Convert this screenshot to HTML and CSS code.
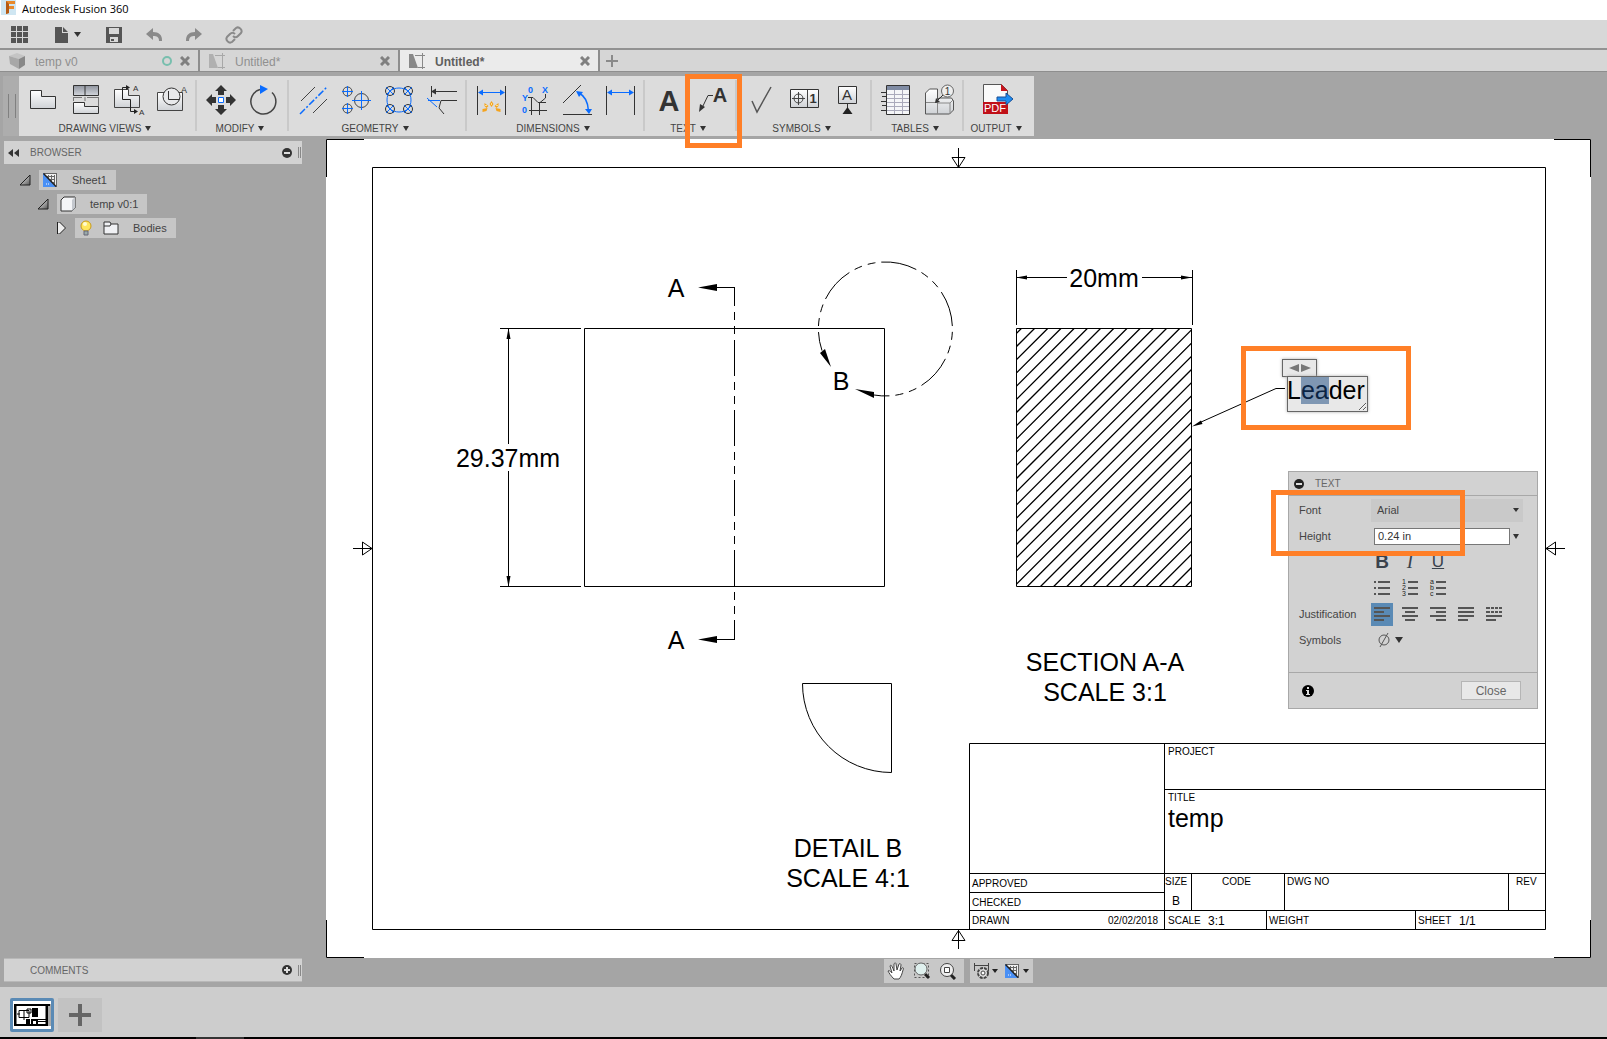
FILE: index.html
```html
<!DOCTYPE html>
<html lang="en">
<head>
    <meta charset="UTF-8">
    <title>Autodesk Fusion 360</title>
    <link rel="stylesheet" href="styles.css">
</head>
<body>
<!-- shared gradients and symbols -->
<svg class="defs" width="0" height="0" aria-hidden="true">
    <defs>
        <linearGradient id="metal" x1="0" y1="0" x2="0" y2="1">
            <stop offset="0" stop-color="#fff"/>
            <stop offset="1" stop-color="#cfd2d6"/>
        </linearGradient>
        <linearGradient id="metalDark" x1="0" y1="0" x2="0" y2="1">
            <stop offset="0" stop-color="#8f949e"/>
            <stop offset="1" stop-color="#d3d6dc"/>
        </linearGradient>
        <linearGradient id="fade" x1="0" y1="0" x2="1" y2="1">
            <stop offset="0" stop-color="#fff"/>
            <stop offset="1" stop-color="#555"/>
        </linearGradient>
        <symbol id="sheetIcon" viewBox="0 0 16 16">
            <rect x="1.500" y="1.500" width="13" height="13" fill="#f0f0f0" stroke="#666"/>
            <path d="M4 4.500h9M6 7.500h7M9 10.500h4M6.500 3v5M9.500 3v8M12.500 3v10" stroke="#666" fill="none"/>
            <path d="M1 1V15H14Z" fill="#4a90f5"/>
            <path d="M1.500 1.500L14 14.500" stroke="#222" stroke-width="1.500"/>
            <path d="M4 12h1M6 12h1" stroke="#fff"/>
        </symbol>
        <symbol id="drawIcon" viewBox="0 0 16 16">
            <path d="M0 1h4l5 14H0z"/>
            <path d="M6 2.500h10M13.500 0v16M9 14.500h7" stroke="currentColor" fill="none"/>
        </symbol>
        <symbol id="close" viewBox="0 0 10 10">
            <path d="M1 1l8 8M9 1L1 9" stroke="#808080" stroke-width="3"/>
        </symbol>
    </defs>
</svg>

<div class="app">
    <header>
        <div class="title-bar">
            <svg class="logo" viewBox="0 0 16 16">
                <rect width="15" height="15" fill="#cfe6f2"/>
                <path d="M5 1h9v3H8v2h5v3H8v4l-3 1z" fill="#e8892b"/>
                <path d="M5 1l3 3v9l-3 1z" fill="#b45a14"/>
            </svg>
            <span>Autodesk Fusion 360</span>
        </div>
        <div class="quick-bar">
            <button class="quick" aria-label="Data panel">
                <svg viewBox="0 0 18 18" width="18" height="18"><path fill="#555" d="M0 0h5v5H0zM6 0h5v5H6zM12 0h5v5h-5zM0 6h5v5H0zM6 6h5v5H6zM12 6h5v5h-5zM0 12h5v5H0zM6 12h5v5H6zM12 12h5v5h-5z"/></svg>
            </button>
            <button class="quick file" aria-label="File">
                <svg viewBox="0 0 28 18" width="28" height="18"><path fill="#555" d="M1 1h7v6h6v10H1zM9 1l5 5H9z"/><path fill="#333" d="M20 6h7l-3.500 5z"/></svg>
            </button>
            <button class="quick" aria-label="Save">
                <svg viewBox="0 0 18 18" width="18" height="18"><path fill="#555" d="M1 1h16v16H1z"/><path fill="#d8d8d8" d="M4 2h10v6H4zM5 11h8v5H5z"/><path fill="#555" d="M6 13h3v2H6z"/></svg>
            </button>
            <button class="quick" aria-label="Undo">
                <svg viewBox="0 0 18 18" width="18" height="18"><path fill="#8a8a8a" d="M1 8l7-6v4c6 0 9 3 9 8v1h-3c0-4-2-5-6-5v4z"/></svg>
            </button>
            <button class="quick" aria-label="Redo">
                <svg viewBox="0 0 18 18" width="18" height="18"><path fill="#8a8a8a" d="M17 8l-7-6v4c-6 0-9 3-9 8v1h3c0-4 2-5 6-5v4z"/></svg>
            </button>
            <button class="quick" aria-label="Link">
                <svg viewBox="0 0 18 18" width="18" height="18" fill="none" stroke="#8a8a8a" stroke-width="2"><path d="M8 5l3-3c3-2 7 2 5 5l-3 3c-2 2-4 1-5 0"/><path d="M10 13l-3 3c-3 2-7-2-5-5l3-3c2-2 4-1 5 0"/></svg>
            </button>
        </div>
        <nav class="tabs">
            <div class="tab">
                <svg class="tab-icon" viewBox="0 0 16 16"><path d="M0 3l8-3 8 3-6 3z" fill="#c4c4c4"/><path d="M0 3l10 3v10L1 11z" fill="#a8a8a8"/><path d="M10 6l6-3v9l-6 4z" fill="#888"/></svg>
                <span class="tab-name">temp v0</span>
                <svg class="status" viewBox="0 0 10 10"><circle cx="5" cy="5" r="4" fill="none" stroke="#78bfae" stroke-width="2"/></svg>
                <button class="tab-close" aria-label="Close tab"><svg width="10" height="10"><use href="#close"/></svg></button>
            </div>
            <div class="tab">
                <svg class="tab-icon pale"><use href="#drawIcon"/></svg>
                <span class="tab-name">Untitled*</span>
                <button class="tab-close" aria-label="Close tab"><svg width="10" height="10"><use href="#close"/></svg></button>
            </div>
            <div class="tab active">
                <svg class="tab-icon"><use href="#drawIcon"/></svg>
                <span class="tab-name">Untitled*</span>
                <button class="tab-close" aria-label="Close tab"><svg width="10" height="10"><use href="#close"/></svg></button>
            </div>
            <button class="tab-add" aria-label="New tab"><svg width="12" height="12"><path d="M6 0v12M0 6h12" stroke="#8a8a8a" stroke-width="2"/></svg></button>
        </nav>
    </header>

    <div class="toolbar">
        <div class="grip"></div>
        <section class="group">
            <div class="tools">
                <button class="tool" aria-label="Base view">
                    <svg viewBox="0 0 32 32"><path d="M3.500 6.500h11v6h14v12h-25z" fill="url(#metal)" stroke="#333"/></svg>
                </button>
                <button class="tool" aria-label="Projected view">
                    <svg viewBox="0 0 32 32"><path d="M3.500 1.500h25v10h-25z" fill="url(#metalDark)" stroke="#333"/><path d="M15 1v11" stroke="#333"/><path d="M3.500 13v4M15 13v4M28.500 13v9M4 13.500h8M17 13.500h11" stroke="#777" fill="none"/><path d="M3.500 18.500h11v4h14v7h-25z" fill="url(#metal)" stroke="#333"/></svg>
                </button>
                <button class="tool" aria-label="Section view">
                    <svg viewBox="0 0 32 32"><path d="M1.500 5.500h14v6h11v12h-25z" fill="url(#metal)" stroke="#444"/><path d="M13 3.500H9.500v12h8v12H22" fill="none" stroke="#222"/><path d="M13 1l4 2.500L13 6zM21 25l4 2.500L21 30z" fill="#222"/><text x="20" y="7" font-size="8">A</text><text x="26" y="31" font-size="8">A</text></svg>
                </button>
                <button class="tool" aria-label="Detail view">
                    <svg viewBox="0 0 32 32"><path d="M1.500 8.500h25v18h-25z" fill="url(#metal)" stroke="#444"/><circle cx="15.500" cy="12.500" r="8.500" fill="#e8e9eb" stroke="#333"/><path d="M12.500 7v8.500h11" fill="none" stroke="#333"/><text x="25" y="9" font-size="9">A</text></svg>
                </button>
            </div>
            <button class="group-name">DRAWING VIEWS</button>
        </section>
        <section class="group">
            <div class="tools">
                <button class="tool" aria-label="Move">
                    <svg viewBox="0 0 32 32"><path fill="#333" d="M16 1l6 6h-3v4h-6V7h-3zM16 31l6-6h-3v-4h-6v4h-3zM1 16l6-6v3h4v6H7v3zM31 16l-6-6v3h-4v6h4v3z"/><path d="M13.500 13.500h5v5h-5z" fill="#fff" stroke="#0a6cff"/></svg>
                </button>
                <button class="tool" aria-label="Rotate">
                    <svg viewBox="0 0 32 32"><path d="M12 5.500A12.500 12.500 0 1 0 24 8.500" fill="none" stroke="#444" stroke-width="1.500"/><path d="M12 1l8 4-8 5z" fill="#0a6cff"/></svg>
                </button>
            </div>
            <button class="group-name">MODIFY</button>
        </section>
        <section class="group">
            <div class="tools">
                <button class="tool" aria-label="Centerline">
                    <svg viewBox="0 0 32 32"><path d="M4 17L18 3M16 29l14-14" stroke="#444"/><path d="M3 30L30 3" stroke="#0a6cff" stroke-width="1.500" stroke-dasharray="7 2 2 2"/></svg>
                </button>
                <button class="tool" aria-label="Center mark">
                    <svg viewBox="0 0 32 32" fill="none"><g stroke="#444"><circle cx="7.500" cy="7.500" r="4.500"/><circle cx="7.500" cy="24.500" r="4.500"/><circle cx="21.500" cy="16.500" r="7"/></g><path d="M7.500 2v11M2 7.500h11M7.500 19v11M2 24.500h11M21.500 7v19M12 16.500h19" stroke="#0a6cff"/></svg>
                </button>
                <button class="tool" aria-label="Center mark pattern">
                    <svg viewBox="0 0 32 32" fill="none"><path d="M7 7c5-4 13-4 18 0 4 5 4 13 0 18-5 4-13 4-18 0-4-5-4-13 0-18z" stroke="#0a6cff"/><g stroke="#333"><circle cx="7" cy="7" r="4.500"/><circle cx="25" cy="7" r="4.500"/><circle cx="7" cy="25" r="4.500"/><circle cx="25" cy="25" r="4.500"/></g><path d="M3 3l8 8M11 3l-8 8M21 3l8 8M29 3l-8 8M3 21l8 8M11 21l-8 8M21 21l8 8M29 21l-8 8" stroke="#0a6cff"/></svg>
                </button>
                <button class="tool" aria-label="Edge extension">
                    <svg viewBox="0 0 32 32" fill="none"><path d="M5.500 2v11M6 7.500h25M31 16.500H15L13 24l5 6" stroke="#333"/><path d="M5 7.500l5-3v6z" fill="#333"/><path d="M1 14l10 9M2 16.500h12" stroke="#0a6cff"/></svg>
                </button>
            </div>
            <button class="group-name">GEOMETRY</button>
        </section>
        <section class="group">
            <div class="tools">
                <button class="tool" aria-label="Dimension">
                    <svg viewBox="0 0 32 32"><path d="M2.500 2v29M30.500 2v29" stroke="#333"/><path d="M5 8.500h23" stroke="#0a6cff"/><path d="M3 8.500l5-3v6zM30 8.500l-5-3v6z" fill="#0a6cff"/><path fill="#f5a31c" d="M16.500 17l2 3-2 3-2-3zM9.500 19l4 3-2 2-2-2zM23.500 19l-4 3 2 2 2-2zM7.500 25l5-1-1 3-4 1zM25.500 25l-5-1 1 3 4 1z"/><path fill="#ffe08a" d="M16 19h1v2h-1zM10 21h2v1h-2zM21 21h2v1h-2z"/></svg>
                </button>
                <button class="tool" aria-label="Ordinate dimension">
                    <svg viewBox="0 0 32 32"><path d="M10 13.500h5l5 5h8M13.500 13v18M11 26.500h18M27.500 10v4l-6 5v12" fill="none" stroke="#333"/><g class="axis"><text x="10" y="9">0</text><text x="24" y="9">X</text><text x="4" y="17">Y</text><text x="4" y="29">0</text></g></svg>
                </button>
                <button class="tool" aria-label="Angular dimension">
                    <svg viewBox="0 0 32 32"><path d="M2 19L20 1M2 30.500h29" stroke="#333"/><path d="M18 9c6 3 9 9 9.500 18" fill="none" stroke="#0a6cff" stroke-width="1.500"/><path d="M15 7l7 1-4 5zM24 25h7l-3 5z" fill="#0a6cff"/></svg>
                </button>
                <button class="tool" aria-label="Linear dimension">
                    <svg viewBox="0 0 32 32"><path d="M2.500 2v29M30.500 2v29" stroke="#333"/><path d="M5 8.500h23" stroke="#0a6cff"/><path d="M3 8.500l5-3v6zM30 8.500l-5-3v6z" fill="#0a6cff"/></svg>
                </button>
            </div>
            <button class="group-name">DIMENSIONS</button>
        </section>
        <section class="group text-group">
            <div class="tools">
                <button class="tool" aria-label="Text">
                    <svg viewBox="0 0 32 32"><text class="glyph" x="16" y="27" font-size="29" text-anchor="middle">A</text></svg>
                </button>
                <button class="tool" aria-label="Leader">
                    <svg viewBox="0 0 32 32"><path d="M17 11.500h-5L6 24" fill="none" stroke="#333"/><path d="M3 28l1-8 5 3z" fill="#333"/><text class="glyph" x="24" y="18" font-size="20" text-anchor="middle">A</text></svg>
                </button>
            </div>
            <button class="group-name">TEXT</button>
            <span class="callout callout-tool"></span>
        </section>
        <section class="group">
            <div class="tools">
                <button class="tool" aria-label="Surface texture">
                    <svg viewBox="0 0 32 32"><path d="M7 17l5 11L26 3" fill="none" stroke="#555" stroke-width="1.500"/></svg>
                </button>
                <button class="tool" aria-label="Feature control frame">
                    <svg viewBox="0 0 32 32"><path d="M2.500 5.500h28v18h-28z" fill="url(#metal)" stroke="#333"/><path d="M19.500 6v17M10.500 8v13M4 14.500h13" stroke="#444"/><circle cx="10.500" cy="14.500" r="4.500" fill="none" stroke="#444"/><text class="glyph" x="25" y="19" font-size="13" text-anchor="middle">1</text></svg>
                </button>
                <button class="tool" aria-label="Datum identifier">
                    <svg viewBox="0 0 32 32"><path d="M7.500 2.500h18v17h-18z" fill="url(#metal)" stroke="#333"/><path d="M16.500 20v5" stroke="#333"/><path d="M16.500 23l5 7h-10z" fill="#222"/><text x="16" y="16" font-size="15" text-anchor="middle">A</text></svg>
                </button>
            </div>
            <button class="group-name">SYMBOLS</button>
        </section>
        <section class="group">
            <div class="tools">
                <button class="tool" aria-label="Table">
                    <svg viewBox="0 0 32 32"><path d="M6.500 1.500h23v29h-23z" fill="#f5f6f8" stroke="#333"/><path d="M7 2h22v4H7z" fill="#7f8ba3"/><path d="M7 10.500h22M7 14.500h22M7 18.500h22M7 22.500h22M7 26.500h22M14.500 6v24M22.500 6v24" stroke="#aab"/><path d="M1 8.500h5M2 12.500h4M1 17.500h5M2 21.500h4M1 26.500h5" stroke="#333"/></svg>
                </button>
                <button class="tool" aria-label="Balloon">
                    <svg viewBox="0 0 32 32"><path d="M2.500 9l4-4h8v10l2-1h12l2 3v9l-4 4h-24z" fill="url(#metal)" stroke="#555"/><path d="M3 18.500h12M14.500 15v15M15 19h12l3-3M27 19v11" fill="none" stroke="#888"/><path d="M21 10l-7 7" stroke="#333"/><path d="M12 19l1-5 4 4z" fill="#333"/><circle cx="24.500" cy="7" r="6" fill="#eee" stroke="#666"/><text x="24.500" y="11" font-size="10" text-anchor="middle">1</text></svg>
                </button>
            </div>
            <button class="group-name">TABLES</button>
        </section>
        <section class="group">
            <div class="tools">
                <button class="tool" aria-label="Output PDF">
                    <svg viewBox="0 0 32 32"><path d="M1.500.500h18l6 6v12h-24z" fill="#fafafa" stroke="#555"/><path d="M19 0l7 7h-7z" fill="#c8141c"/><path d="M1 18h25v12H1z" fill="#c01018"/><path d="M15 13h9V9l7 6-7 6v-4h-9z" fill="#1e8cf0" stroke="#1a4f94"/><text class="pdf" x="13" y="28" font-size="11" text-anchor="middle">PDF</text></svg>
                </button>
            </div>
            <button class="group-name">OUTPUT</button>
        </section>
    </div>

    <main class="workspace">
        <aside class="sidebar">
            <div class="panel-head">
                <svg class="collapse" viewBox="0 0 12 8"><path d="M0 4l5-4v8zM6 4l5-4v8z" fill="#333"/></svg>
                <span>BROWSER</span>
                <svg class="round" viewBox="0 0 10 10"><circle cx="5" cy="5" r="5" fill="#333"/><path d="M2 5h6" stroke="#ddd" stroke-width="2"/></svg>
                <i class="bars"></i>
            </div>
            <ul class="tree">
                <li>
                    <div class="row">
                        <svg class="arrow" viewBox="0 0 12 12"><path d="M11 1v10H1z" fill="url(#fade)" stroke="#222"/></svg>
                        <div class="node"><svg class="node-icon"><use href="#sheetIcon"/></svg><span>Sheet1</span></div>
                    </div>
                    <ul>
                        <li>
                            <div class="row">
                                <svg class="arrow" viewBox="0 0 12 12"><path d="M11 1v10H1z" fill="url(#fade)" stroke="#222"/></svg>
                                <div class="node"><svg class="node-icon" viewBox="0 0 16 16"><path d="M1 4l3-3h11v11l-3 3H1z" fill="#f4f5f7" stroke="#333"/><path d="M12 4l3-3v11l-3 3z" fill="#c4c8ce"/></svg><span>temp v0:1</span></div>
                            </div>
                            <ul>
                                <li class="row">
                                    <svg class="arrow" viewBox="0 0 12 12"><path d="M2.500 0v12h2l6-6-6-6z" fill="#eee" stroke="#222"/></svg>
                                    <div class="node">
                                        <svg class="node-icon" viewBox="0 0 16 16"><circle cx="8" cy="6" r="5" fill="#ffe65c" stroke="#c79a1c"/><circle cx="7" cy="4" r="2" fill="#fffbd0"/><path d="M6 11h4v4H6z" fill="#9aa" stroke="#667"/></svg>
                                        <svg class="node-icon folder" viewBox="0 0 16 16"><path d="M1 2h6l1 2h7v10H1z" fill="#f0f1f4" stroke="#333"/><path d="M1 6h6l1-2" fill="none" stroke="#333"/></svg>
                                        <span>Bodies</span>
                                    </div>
                                </li>
                            </ul>
                        </li>
                    </ul>
                </li>
            </ul>
            <div class="panel-head comments">
                <span>COMMENTS</span>
                <svg class="round" viewBox="0 0 10 10"><circle cx="5" cy="5" r="5" fill="#333"/><path d="M2 5h6M5 2v6" stroke="#ddd" stroke-width="2"/></svg>
                <i class="bars"></i>
            </div>
        </aside>

        <div class="canvas">
            <div class="sheet">
                <!-- the viewBox keeps the window coordinates of the drawing area -->
                <svg class="drawing" viewBox="326 139 1265 819">
                    <defs>
                        <clipPath id="sectionClip"><path d="M1016.500 328.500h175v258h-175z"/></clipPath>
                    </defs>
                    <g class="line">
                        <!-- sheet corners -->
                        <path d="M364 139.500h-37.500V177M1554 139.500h36.500V177M364 957.500h-37.500V920M1554 957.500h36.500V920"/>
                        <path d="M372.500 167.500h1173v762h-1173z"/>
                        <!-- centering marks -->
                        <path d="M958.500 148v19M952 157.500h13l-6.500 10zM958.500 930v19M952 940.500h13l-6.500-10z"/>
                        <path d="M353 548.500h19M362.500 542v13l9.500-6.500zM1546 548.500h19M1555.500 542v13l-9.500-6.500z"/>

                        <!-- front view -->
                        <path d="M584.500 328.500h300v258h-300z"/>
                        <path d="M500 328.500h81M500 586.500h81M508.500 329v115M508.500 471v115"/>
                        <path class="cut" d="M734.500 287v353"/>
                        <path d="M717 287.500h18M717 639.500h18"/>
                        <path class="cut" d="M822 350.600A67 67 0 1 1 874 395"/>

                        <!-- section view -->
                        <path d="M1016.500 328.500h175v258h-175z"/>
                        <path id="hatch" clip-path="url(#sectionClip)"/>
                        <path d="M1016.500 270v55M1192.500 270v55M1017 277.500h50M1142 277.500h50"/>
                        <path d="M1200 422.500l76-34h9"/>

                        <!-- detail view -->
                        <path d="M802.500 683.500h89v89A89 89 0 0 1 802.500 683.500z"/>

                        <!-- title block -->
                        <path d="M969.500 929.500v-186h576M1164.500 743.500v186M1164.500 789.500h381M969.500 873.500h576M969.500 892.500h195M969.500 910.500h576"/>
                        <path d="M1191.500 873.500v37M1284.500 873.500v37M1508.500 873.500v37M1266.500 910.500v19M1415.500 910.500v19"/>
                    </g>
                    <g class="head">
                        <path d="M508.500 328l2 11h-4zM508.500 587l2-11h-4z"/>
                        <path d="M698 287.500l19-3.500v7zM698 639.500l19-3.500v7z"/>
                        <path d="M831 367l-11-14 5-4zM855 389l19 3v6z"/>
                        <path d="M1016 277.500l11-2v4zM1192 277.500l-11-2v4z"/>
                        <path d="M1192 426.500l9-6 1.500 3.500z"/>
                    </g>
                    <g class="note">
                        <text x="508" y="467">29.37mm</text>
                        <text x="676" y="297">A</text>
                        <text x="676" y="649">A</text>
                        <text x="841" y="390">B</text>
                        <text x="1104" y="287">20mm</text>
                        <text x="1105" y="671">SECTION A-A</text>
                        <text x="1105" y="701">SCALE 3:1</text>
                        <text x="848" y="857">DETAIL B</text>
                        <text x="848" y="887">SCALE 4:1</text>
                    </g>
                    <g class="field">
                        <text x="1168" y="755">PROJECT</text>
                        <text x="1168" y="801">TITLE</text>
                        <text x="1168" y="827" class="part">temp</text>
                        <text x="972" y="887">APPROVED</text>
                        <text x="972" y="906">CHECKED</text>
                        <text x="972" y="924">DRAWN</text>
                        <text x="1108" y="924">02/02/2018</text>
                        <text x="1165" y="885">SIZE</text>
                        <text x="1172" y="905" class="value">B</text>
                        <text x="1222" y="885">CODE</text>
                        <text x="1287" y="885">DWG NO</text>
                        <text x="1516" y="885">REV</text>
                        <text x="1168" y="924">SCALE</text>
                        <text x="1208" y="925" class="value">3:1</text>
                        <text x="1269" y="924">WEIGHT</text>
                        <text x="1418" y="924">SHEET</text>
                        <text x="1459" y="925" class="value">1/1</text>
                    </g>
                </svg>

                <div class="leader">
                    <div class="ruler"><svg width="22" height="10" viewBox="0 0 22 10"><path d="M0 5l10-4v8zM22 5L12 1v8z" fill="#777"/></svg></div>
                    <textarea id="leaderText" aria-label="Leader text" rows="1" spellcheck="false">Leader</textarea>
                </div>

                <form class="dialog">
                    <div class="dialog-head">
                        <svg class="round" viewBox="0 0 10 10"><circle cx="5" cy="5" r="5" fill="#222"/><path d="M2 5h6" stroke="#ddd" stroke-width="2"/></svg>
                        <span>TEXT</span>
                    </div>
                    <div class="dialog-body">
                        <label for="font">Font</label>
                        <div class="drop"><select id="font"><option>Arial</option></select></div>
                        <label for="height">Height</label>
                        <div class="combo"><input id="height" type="text" value="0.24 in"><i class="caret"></i></div>
                        <span></span>
                        <div class="marks">
                            <button type="button" class="bold">B</button>
                            <button type="button" class="italic">I</button>
                            <button type="button" class="under">U</button>
                        </div>
                        <span></span>
                        <div class="marks">
                            <button type="button" aria-label="Bullets"><svg viewBox="0 0 16 16"><path d="M0 2h2M4 2h12M0 8h2M4 8h12M0 14h2M4 14h12"/></svg></button>
                            <button type="button" aria-label="Numbers"><svg viewBox="0 0 16 16"><path d="M6 2h10M6 8h10M6 14h10"/><text x="0" y="4">1</text><text x="0" y="10">2</text><text x="0" y="16">3</text></svg></button>
                            <button type="button" aria-label="Letters"><svg viewBox="0 0 16 16"><path d="M6 2h10M6 8h10M6 14h10"/><text x="0" y="4">a</text><text x="0" y="10">b</text><text x="0" y="16">c</text></svg></button>
                        </div>
                        <span>Justification</span>
                        <div class="marks">
                            <button type="button" class="on" aria-label="Left"><svg viewBox="0 0 16 16"><path d="M0 2h16M0 6h10M0 10h16M0 14h10"/></svg></button>
                            <button type="button" aria-label="Center"><svg viewBox="0 0 16 16"><path d="M0 2h16M3 6h10M0 10h16M3 14h10"/></svg></button>
                            <button type="button" aria-label="Right"><svg viewBox="0 0 16 16"><path d="M0 2h16M6 6h10M0 10h16M6 14h10"/></svg></button>
                            <button type="button" aria-label="Justify"><svg viewBox="0 0 16 16"><path d="M0 2h16M0 6h16M0 10h16M0 14h10"/></svg></button>
                            <button type="button" aria-label="Distribute"><svg viewBox="0 0 16 16"><path d="M0 2h4M5 2h3M9 2h3M13 2h3M0 6h4M5 6h3M9 6h3M13 6h3M0 10h16M0 14h10"/></svg></button>
                        </div>
                        <span>Symbols</span>
                        <div class="marks">
                            <button type="button" class="symbol" aria-label="Insert symbol"><svg viewBox="0 0 26 16"><circle cx="7" cy="8" r="5" class="thin"/><path d="M3 15l8-14" class="thin"/><path d="M18 5h8l-4 6z" class="solid"/></svg></button>
                        </div>
                    </div>
                    <div class="dialog-foot">
                        <svg class="info" viewBox="0 0 12 12"><circle cx="6" cy="6" r="6"/><path d="M5 2h2v2H5zM4 5h3v4h1v1H4V9h1V6H4z" fill="#ddd"/></svg>
                        <button type="button" class="close">Close</button>
                    </div>
                </form>

                <span class="callout callout-leader"></span>
                <span class="callout callout-font"></span>
            </div>

            <div class="nav-bar">
                <div class="nav-group">
                    <button aria-label="Pan"><svg width="18" height="18" viewBox="0 0 18 18"><path d="M7 17c-3-3-5-6-6-8 1-1 2 0 4 2L3 4c1-2 2 0 4 5L7 2c1-2 2-1 2 0l1 6 2-6c1-1 2 0 2 1l-1 6 2-3c1-1 2 0 1 2-1 4-2 7-4 9z" fill="#fff" stroke="#444"/></svg></button>
                    <button aria-label="Zoom window"><svg width="18" height="18" viewBox="0 0 18 18"><path d="M1.500 1.500h14v14h-14z" fill="none" stroke="#555" stroke-dasharray="2 2"/><path d="M12 12l4 4" stroke="#222" stroke-width="3"/><circle cx="8" cy="7" r="6" fill="#dff0ee" stroke="#666"/></svg></button>
                    <button aria-label="Fit"><svg width="18" height="18" viewBox="0 0 18 18"><path d="M11 12l5 5" stroke="#222" stroke-width="3"/><circle cx="8" cy="8" r="6.500" fill="#eee" stroke="#444"/><path d="M5.500 5.500h5v5h-5z" fill="#fff" stroke="#444"/></svg></button>
                </div>
                <div class="nav-group">
                    <button aria-label="Drawing settings"><svg width="26" height="18" viewBox="0 0 26 18"><path d="M1.500 1v8M15.500 1v8M2 3.500h13" stroke="#444" fill="none"/><circle cx="10" cy="11" r="5" fill="#ddd" stroke="#444" stroke-width="2" stroke-dasharray="3 1"/><circle cx="10" cy="11" r="2" fill="#fff" stroke="#444"/><path d="M19 7h6l-3 4z" fill="#222"/></svg></button>
                    <button aria-label="Sheet settings"><svg width="26" height="16" viewBox="0 0 26 16"><use href="#sheetIcon" width="16" height="16"/><path d="M19 6h6l-3 4z" fill="#222"/></svg></button>
                </div>
            </div>
        </div>
    </main>

    <footer class="sheets">
        <button class="thumb" aria-label="Sheet 1">
            <svg viewBox="0 0 38 28"><path d="M1 3h36v21H1z" fill="#fff"/><path d="M33 3h5v22h-5z" fill="#aaa"/><path d="M3 4.500h30v19H3zM6 9.500h10v7H6zM14 8h4v4h-4zM11 10v9M4 13h3" fill="none" stroke="#000"/><path d="M1 3h36v2H1zM1 23h34v2H1zM1 3h2v21H1zM33 3h2v21h-2zM19 7h6v9h-6zM13 18h4v5h-4zM18 18h7v6h-7z"/><path d="M25 18.500h9M25 20.500h9" stroke="#000"/><path d="M20 20h3v3h-3z" fill="#fff"/></svg>
        </button>
        <button class="add" aria-label="Add sheet"><svg width="22" height="22"><path d="M11 0v22M0 11h22" stroke="#666" stroke-width="4"/></svg></button>
    </footer>
    <div class="taskbar"></div>
</div>

<script type="text/javascript">
    window.onload = function () {
        // 45 degree hatching of the section view
        let d = "";
        for (let x = 763.3; x < 1192; x += 13.2) {
            d += "M" + x.toFixed(1) + " 586.5l258-258";
        }
        document.getElementById("hatch").setAttribute("d", d);

        let text = document.getElementById("leaderText");
        text.focus();
        text.setSelectionRange(1, 3);
    }
</script>
</body>
</html>
```
FILE: styles.css
```css
* {
    margin: 0;
    padding: 0;
    box-sizing: border-box;
}
body {
    font-family: "Liberation Sans", Arial, sans-serif;
    font-size: 11px;
    color: #444;
    background-color: #a5a5a5;
}
ul {
    list-style: none;
}
svg {
    display: block;
    flex: none;
}
button {
    font: inherit;
    color: inherit;
    border: 0;
    background: none;
}
.defs {
    position: absolute;
}
.app {
    display: flex;
    flex-direction: column;
    min-height: 100vh;
}

/* header */
.title-bar {
    display: flex;
    align-items: center;
    gap: 5px;
    height: 20px;
    padding: 0 1px 4px;
    background-color: #fff;
    font-family: "Open Sans", sans-serif;
    font-size: 11px;
    color: #000;
}
.logo {
    width: 16px;
    height: 16px;
}
.quick-bar {
    display: flex;
    align-items: center;
    gap: 22px;
    height: 30px;
    padding: 2px 0 0 11px;
    background-color: #d8d8d8;
    border-bottom: 2px solid #929292;
}
.quick.file {
    margin: 0 1px 0 3px;
}
.tabs {
    display: flex;
    height: 22px;
    background-color: #d6d6d6;
    border-bottom: 1px solid #8e8e8e;
}
.tab {
    display: flex;
    align-items: center;
    width: 200px;
    padding: 0 8px 0 9px;
    border-right: 2px solid #8e8e8e;
    font-size: 12px;
    color: #909090;
}
.tab.active {
    background-color: #ebebeb;
    color: #5f5f5f;
    font-weight: bold;
}
.tab-icon {
    width: 16px;
    height: 16px;
    margin-right: 10px;
    color: #888;
    fill: #888;
}
.tab-icon.pale {
    color: #a8a8a8;
    fill: #b0b0b0;
}
.tab-name {
    flex: 1;
    padding-top: 3px;
}
.status {
    width: 10px;
    height: 10px;
    margin-right: 8px;
}
.tab-add {
    padding: 0 6px;
}

/* toolbar */
.toolbar {
    display: flex;
    height: 67px;
    padding: 4px 0 3px 3px;
}
.grip {
    width: 16px;
    padding: 18px 5px;
    background-color: #adadad;
}
.grip::before {
    content: "";
    display: block;
    width: 6px;
    height: 24px;
    border: 1px solid #808080;
    border-width: 0 1px;
}
.group {
    position: relative;
    display: flex;
    flex-direction: column;
    align-items: center;
    min-width: 70px;
    padding: 8px 4px 0 2px;
    background-color: #dcdcdc;
}
.group:not(:last-child)::after {
    content: "";
    position: absolute;
    top: 4px;
    right: 0;
    bottom: 5px;
    width: 2px;
    background-color: #c9c9c9;
}
.tools {
    display: flex;
}
.tool {
    display: flex;
    justify-content: center;
    width: 43px;
}
.tool svg {
    width: 32px;
    height: 32px;
    fill: #333;
}
.tool svg[fill] {
    fill: none;
}
.tool .glyph {
    font-weight: bold;
}
.tool .axis {
    font-size: 9px;
    font-weight: bold;
    fill: #0a6cff;
}
.tool .pdf {
    fill: #fff;
}
.group-name {
    display: flex;
    align-items: center;
    gap: 4px;
    height: 18px;
    margin-top: 5px;
    padding-right: 4px;
    font-size: 10px;
    color: #444;
}
.group-name::after, .caret {
    content: "";
    border: 3px solid transparent;
    border-top: 5px solid #333;
    border-bottom: 0;
}

/* orange highlight frames */
.callout {
    position: absolute;
    z-index: 5;
    border: 5px solid #ff7f27;
    pointer-events: none;
}
.callout-tool {
    top: -2px;
    left: 40px;
    width: 57px;
    height: 74px;
}
.callout-leader {
    top: 207px;
    left: 915px;
    width: 170px;
    height: 84px;
}
.callout-font {
    top: 351px;
    left: 945px;
    width: 194px;
    height: 66px;
}

/* browser panel */
.workspace {
    display: flex;
    flex: 1;
}
.sidebar {
    display: flex;
    flex-direction: column;
    width: 326px;
    padding: 2px 24px 5px 4px;
}
.panel-head {
    display: flex;
    align-items: center;
    height: 23px;
    padding: 0 1px 0 4px;
    background-color: #d2d2d2;
    font-size: 10px;
    color: #666;
}
.panel-head span {
    flex: 1;
}
.collapse {
    width: 12px;
    height: 8px;
    margin-right: 10px;
}
.round {
    width: 10px;
    height: 10px;
}
.bars {
    width: 3px;
    height: 11px;
    margin-left: 6px;
    border: 1px solid #888;
    border-width: 0 1px;
}
.comments {
    height: 24px;
    margin-top: auto;
    padding-left: 26px;
    border: 1px solid #b8b8b8;
    border-width: 1px 0;
}
.tree {
    padding: 6px 0 0 15px;
}
.tree ul {
    padding-left: 18px;
}
.row {
    display: flex;
    align-items: center;
    gap: 8px;
    margin-bottom: 4px;
}
.arrow {
    width: 12px;
    height: 12px;
}
.node {
    display: flex;
    align-items: center;
    height: 20px;
    padding: 0 9px 0 3px;
    background-color: #c6c6c6;
}
.node-icon {
    width: 16px;
    height: 16px;
    margin-right: 14px;
}
.node-icon:has(+ .folder) {
    margin-right: 9px;
}

/* drawing */
.canvas {
    flex: 1;
    padding-right: 16px;
}
.sheet {
    position: relative;
    background-color: #fff;
}
.drawing {
    width: 100%;
    height: auto;
}
.line path {
    fill: none;
    stroke: #000;
}
.line #hatch {
    stroke-width: 1.3;
}
.line .cut {
    stroke-dasharray: 36 6 8 6 8 6;
    stroke-dashoffset: 17;
}
.note {
    font-size: 25px;
    text-anchor: middle;
}
.field {
    font-size: 10px;
}
.field .value {
    font-size: 12px;
}
.field .part {
    font-size: 25px;
}

/* leader text editor */
.leader {
    position: absolute;
    top: 220px;
    left: 956px;
}
.ruler {
    display: flex;
    justify-content: center;
    align-items: center;
    width: 35px;
    height: 18px;
    background-color: #e8e8e8;
    border: 1px solid #666;
    box-shadow: 0 0 3px #aaa;
}
.leader textarea {
    display: block;
    width: 81px;
    height: 36px;
    margin: -1px 0 0 5px;
    border: 1px solid #666;
    outline: 0;
    box-shadow: 0 0 3px #aaa;
    background-color: #e8e8e8;
    color: #000;
    font: 25px/27px "Liberation Sans", Arial, sans-serif;
    text-indent: -1px;
    overflow: hidden;
}
.leader textarea::selection {
    background-color: #7f97b3;
    color: #0a2444;
}

/* text dialog */
.dialog {
    position: absolute;
    top: 332px;
    left: 962px;
    width: 250px;
    background-color: #d2d2d2;
    border: 1px solid #a8a8a8;
}
.dialog-head {
    display: flex;
    align-items: center;
    gap: 11px;
    height: 24px;
    padding-left: 5px;
    border-bottom: 1px solid #a8a8a8;
    font-size: 10px;
    color: #666;
}
.dialog-body {
    display: grid;
    grid-template-columns: 72px minmax(0, 1fr);
    grid-auto-rows: 26px;
    align-items: center;
    padding: 1px 14px 19px 10px;
}
.drop {
    position: relative;
    display: flex;
    height: 23px;
}
.drop select {
    appearance: none;
    flex: 1;
    padding-left: 6px;
    border: 0;
    background-color: #c9c9c9;
    color: #444;
    font: inherit;
}
.drop::after {
    content: "";
    position: absolute;
    top: 9px;
    right: 4px;
    border: 3px solid transparent;
    border-top: 4px solid #333;
    border-bottom: 0;
}
.combo {
    display: flex;
    align-items: center;
    gap: 3px;
    padding: 0 4px 0 3px;
}
.combo input {
    flex: 1;
    min-width: 0;
    height: 17px;
    padding-left: 3px;
    border: 1px solid #777;
    font: inherit;
    color: #333;
}
.marks {
    display: flex;
    gap: 6px;
}
.marks button {
    display: flex;
    justify-content: center;
    align-items: center;
    width: 22px;
    height: 23px;
    font-size: 19px;
    color: #3a424c;
}
.marks .bold {
    font-weight: bold;
}
.marks .italic {
    font-family: "Liberation Serif", serif;
    font-style: italic;
}
.marks .under {
    text-decoration: underline;
    font-size: 17px;
}
.marks .on {
    background-color: #5a8ab5;
}
.marks svg {
    width: 16px;
    height: 16px;
    stroke: #555;
    stroke-width: 2;
    fill: none;
    overflow: visible;
}
.marks text {
    stroke: none;
    fill: #222;
    font-size: 7px;
}
.marks .symbol {
    width: 38px;
}
.marks .symbol svg {
    width: 26px;
}
.marks .thin {
    stroke-width: 1;
}
.marks .solid {
    stroke: none;
    fill: #333;
}
.dialog-foot {
    display: flex;
    justify-content: space-between;
    align-items: center;
    height: 36px;
    padding: 0 16px 0 13px;
    border-top: 1px solid #a8a8a8;
}
.info {
    width: 12px;
    height: 12px;
}
.close {
    width: 60px;
    height: 19px;
    border: 1px solid #b5b5b5;
    background-color: #e8e8e8;
    font-size: 12px;
    color: #666;
}

/* navigation bar under the sheet */
.nav-bar {
    display: flex;
    justify-content: center;
    gap: 6px;
    padding: 1px 0 4px;
}
.nav-group {
    display: flex;
    align-items: center;
    gap: 8px;
    height: 24px;
    padding: 0 7px 0 3px;
    background-color: #c8c8c8;
}
.nav-group + .nav-group {
    gap: 5px;
    padding: 0 3px;
}

/* sheet strip */
.sheets {
    display: flex;
    align-items: center;
    gap: 4px;
    height: 50px;
    padding: 6px 10px 0;
    background-color: #cdcdcd;
}
.thumb, .add {
    display: flex;
    justify-content: center;
    align-items: center;
    width: 44px;
    height: 34px;
}
.thumb {
    border: 3px solid #5a8ab5;
    border-radius: 2px;
    background-color: #fff;
}
.thumb svg {
    width: 38px;
    height: 28px;
}
.add {
    background-color: #c2c2c2;
}
.taskbar {
    height: 2px;
    background: linear-gradient(#333, #333) 196px 0 / 48px 2px no-repeat #000;
}
```
